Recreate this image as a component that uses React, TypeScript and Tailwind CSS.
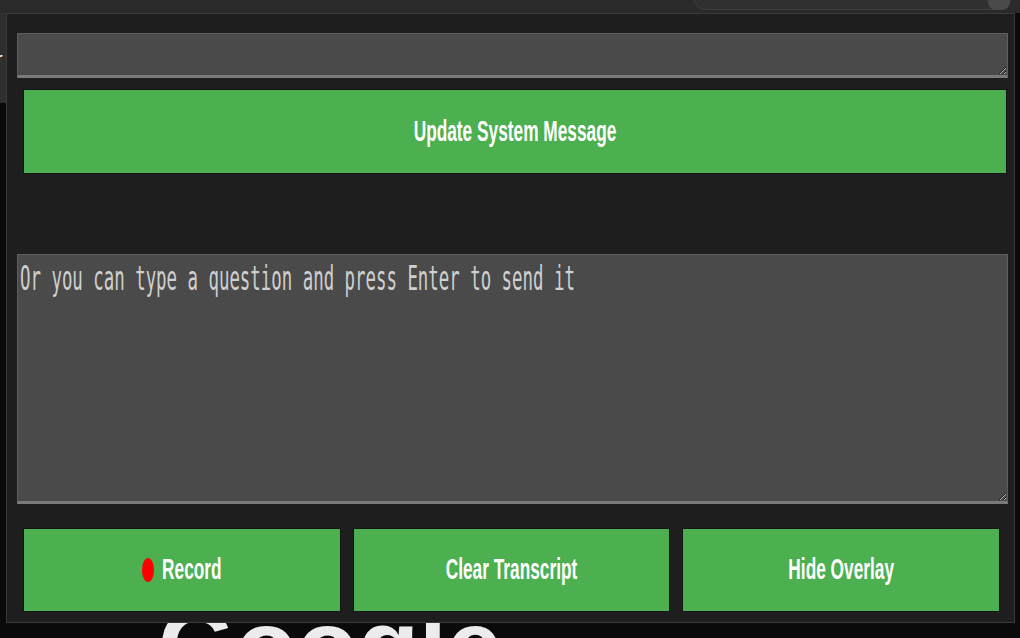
import { useState } from "react";

const btnText = "inline-block scale-y-[1.75] text-[17.3px] leading-none font-bold text-white [font-family:'Liberation_Sans',Arial,sans-serif]";

const OverlayButton = ({ label, dot }: { label: string; dot?: boolean }) => (
  <button className="flex-1 h-full flex items-center justify-center gap-[8px] bg-[#4caf50] border border-[#151515]">
    {dot && <span className="w-[12px] h-[24px] rounded-[50%] bg-[#ff0000]" />}
    <span className={btnText}>{label}</span>
  </button>
);

const App = () => {
  const [systemMessage, setSystemMessage] = useState("");
  const [question, setQuestion] = useState("");

  return (
    <div className="relative w-[1020px] h-[638px] overflow-hidden bg-[#0a0a0a]">
      {/* page behind the overlay */}
      <div className="relative h-[13px] bg-[#2a2a2a]">
        <div className="absolute left-[693px] top-[-10px] w-[318px] h-[20px] rounded-b-[12px] bg-[#303030] border border-[#3e3e3e]" />
        <div className="absolute left-[988px] top-[-6px] w-[22px] h-[16px] rounded-full bg-[#4a4a4a]" />
      </div>
      <div className="flex h-[625px]">
        <div className="w-[6px] bg-[#2e2e2e] h-[90px] overflow-hidden">
          <span className="block mt-[36px] -ml-[4px] text-[20px] leading-none text-white [font-family:'Liberation_Sans',Arial,sans-serif]">r</span>
        </div>
        <div className="flex-1 pt-[582px] pl-[152px]">
          <span className="block text-[100px] leading-none font-bold text-[#ececec] [font-family:'Liberation_Sans',Arial,sans-serif]">Google</span>
        </div>
      </div>

      {/* overlay */}
      <div className="absolute left-[6px] top-[13px] w-[1009px] h-[610px] bg-[#1e1e1e] border border-[#3a3a3a] flex flex-col pt-[19px] pl-[10px] pr-[6px] pb-[10px]">
        <textarea
          className="h-[45px] w-full bg-[#4a4a4a] border border-[#5e5e5e] border-b-[3px] border-b-[#7a7a7a] text-white outline-none"
          value={systemMessage}
          onChange={(e) => setSystemMessage(e.target.value)}
        />

        <button className="mt-[11px] ml-[6px] mr-[1px] h-[85px] flex items-center justify-center bg-[#4caf50] border border-[#151515]">
          <span className={btnText}>Update System Message</span>
        </button>

        <div className="relative mt-[80px] h-[250px]">
          <textarea
            className="w-full h-full bg-[#4a4a4a] border border-[#5e5e5e] border-b-[3px] border-b-[#7a7a7a] text-[#d0d0d0] outline-none p-[3px] text-[17.4px] [font-family:'DejaVu_Sans_Mono',monospace]"
            value={question}
            onChange={(e) => setQuestion(e.target.value)}
          />
          {question === "" && (
            <span className="pointer-events-none absolute left-[3px] top-[9px] origin-top-left scale-y-[1.9] whitespace-nowrap text-[17.4px] leading-none text-[#d0d0d0] [font-family:'DejaVu_Sans_Mono',monospace]">
              Or you can type a question and press Enter to send it
            </span>
          )}
        </div>

        <div className="mt-[24px] ml-[6px] mr-[8px] h-[84px] flex gap-[12px]">
          <OverlayButton label="Record" dot />
          <OverlayButton label="Clear Transcript" />
          <OverlayButton label="Hide Overlay" />
        </div>
      </div>
    </div>
  );
};

export default App;
